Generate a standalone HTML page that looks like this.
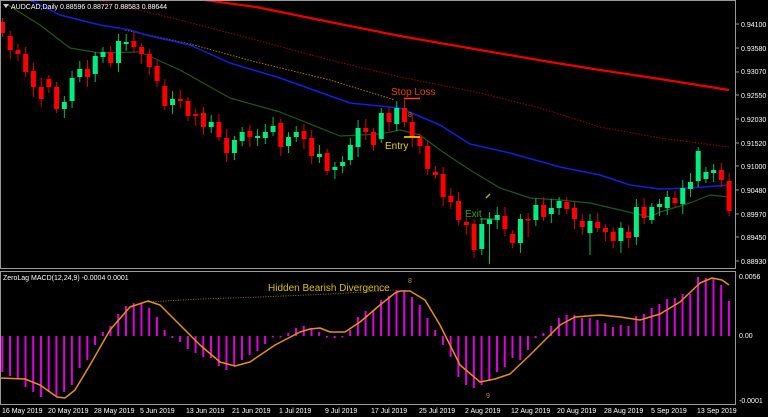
<!DOCTYPE html>
<html><head><meta charset="utf-8"><style>
html,body{margin:0;padding:0;background:#000;width:768px;height:417px;overflow:hidden}
svg{display:block}
text{font-family:"Liberation Sans",sans-serif}
</style></head><body>
<svg id="s" width="768" height="417" xmlns="http://www.w3.org/2000/svg">
<rect width="768" height="417" fill="#000"/>
<g id="g"></g>
<rect x="0.5" y="0.5" width="735" height="268" fill="none" stroke="#9a9a9a"/>
<rect x="0.5" y="271.5" width="735" height="133" fill="none" stroke="#9a9a9a"/>
<g font-size="7" fill="#fff">
<text x="741" y="27">0.94100</text><text x="741" y="51">0.93580</text><text x="741" y="74">0.93070</text>
<text x="741" y="98">0.92550</text><text x="741" y="122">0.92030</text><text x="741" y="146">0.91520</text>
<text x="741" y="169">0.91000</text><text x="741" y="193">0.90480</text><text x="741" y="217">0.89970</text>
<text x="741" y="240">0.89450</text><text x="741" y="264">0.88930</text>
<text x="739" y="279">0.0056</text><text x="739" y="338">0.00</text><text x="739" y="403">-0.0001</text>
</g>
<g stroke="#9a9a9a"><line x1="736" y1="24" x2="739" y2="24"/><line x1="736" y1="48" x2="739" y2="48"/><line x1="736" y1="72" x2="739" y2="72"/><line x1="736" y1="95" x2="739" y2="95"/><line x1="736" y1="119" x2="739" y2="119"/><line x1="736" y1="143" x2="739" y2="143"/><line x1="736" y1="166" x2="739" y2="166"/><line x1="736" y1="190" x2="739" y2="190"/><line x1="736" y1="214" x2="739" y2="214"/><line x1="736" y1="237" x2="739" y2="237"/><line x1="736" y1="261" x2="739" y2="261"/></g>
<g font-size="7" fill="#fff">
<text x="2" y="413">16 May 2019</text><text x="48" y="413">20 May 2019</text><text x="94" y="413">28 May 2019</text>
<text x="140" y="413">5 Jun 2019</text><text x="186" y="413">13 Jun 2019</text><text x="232" y="413">21 Jun 2019</text>
<text x="279" y="413">1 Jul 2019</text><text x="325" y="413">9 Jul 2019</text><text x="371" y="413">17 Jul 2019</text>
<text x="419" y="413">25 Jul 2019</text><text x="465" y="413">2 Aug 2019</text><text x="511" y="413">12 Aug 2019</text>
<text x="557" y="413">20 Aug 2019</text><text x="604" y="413">28 Aug 2019</text><text x="651" y="413">5 Sep 2019</text>
<text x="697" y="413">13 Sep 2019</text>
</g>
<polygon points="3,4 9,4 6,8" fill="#ccc"/>
<text x="11" y="9" font-size="7" fill="#fff">AUDCAD,Daily  0.88596 0.88727 0.88583 0.88644</text>
<text x="3" y="280" font-size="7" fill="#fff">ZeroLag MACD(12,24,9) -0.0004 0.0001</text>
<text x="268" y="291" font-size="10" fill="#d8c000">Hidden Bearish Divergence</text>
<text x="391" y="95" font-size="10" fill="#ee4010">Stop Loss</text>
<line x1="404" y1="98.5" x2="420" y2="98.5" stroke="#ff4010" stroke-width="1.5"/>
<text x="385" y="149" font-size="10" fill="#e8d800">Entry</text>
<line x1="404" y1="137" x2="420" y2="137" stroke="#ffee00" stroke-width="1.5"/>
<text x="465" y="217" font-size="10" fill="#30a030">Exit</text>
<polyline points="480,219 497,219" fill="none" stroke="#30a030" stroke-width="1"/>
<line x1="486" y1="198" x2="490" y2="194" stroke="#d0a000" stroke-width="1.5"/>
<text x="408" y="117" font-size="7" fill="#c08000">8</text>
<text x="408" y="283" font-size="7" fill="#c89000">8</text>
<text x="486" y="398" font-size="7" fill="#c89000">9</text>
</svg>
<script>
var NS="http://www.w3.org/2000/svg",g=document.getElementById("g");
function el(t,a){var e=document.createElementNS(NS,t);for(var k in a)e.setAttribute(k,a[k]);g.appendChild(e);return e;}
function pl(pts,c,w,d){el("polyline",{points:pts,fill:"none",stroke:c,"stroke-width":w,"stroke-dasharray":d||"none","stroke-linejoin":"round"});}
pl("205,0 256,7 330,22 400,36 480,50 550,62 600,70 660,79 729,90","#ee0000",2.2);
pl("97,0 180,20 256,40 330,60 400,77 480,93 540,108 600,127 660,138 729,147","#a00000",1,"1.5,1.5");
pl("125,30 190,44 256,62 330,80 395,100","#b08000",1,"1.5,1.5");
pl("30,0 60,15 100,25 130,30 150,36 190,45 230,63 280,78 350,103 400,108 440,125 470,144 510,153 560,167 600,175 630,185 660,189 690,188 729,185","#1020e0",1.5);
pl("8,5 40,25 70,48 100,53 140,52 180,70 230,98 280,112 340,136 380,134 400,130 420,135 440,150 470,170 500,188 530,198 560,200 590,203 620,210 650,217 660,212 690,203 710,195 729,197","#1a5a1a",1.2);
var C=[[22,33],[36,50],[50,54],[54,72],[71,87],[87,99],[79,87],[87,109],[109,102],[101,78],[77,69],[69,77],[74,56],[57,52],[52,63],[63,41],[44,42],[41,47],[47,54],[54,67],[66,81],[86,106],[105,99],[99,101],[101,116],[114,116],[113,127],[127,122],[122,137],[138,153],
[153,140],[141,132],[131,137],[138,136],[138,132],[132,126],[123,147],[146,137],[137,132],[131,139],[138,156],[157,154],[153,171],[170,167],[166,162],[160,145],[147,128],[128,132],[132,145],[139,113],[113,122],[124,108],[108,122],[122,137],[137,146],[146,169],[172,175],[174,197],[196,202],[201,220],[222,225],[224,250],[249,224],[224,219,212,264],[220,215],[216,229],[234,243],[243,219],[219,220,213,237],[220,205],[205,217],[214,208],[208,201],[202,209],[208,219],[221,227],[233,221,214,255],[222,228],[228,232],[232,241],[241,228,222,253],[232,238],[237,207],[207,218],[220,207],[207,204],[208,197],[198,203],[204,188],[189,182],[181,151],[179,172],[173,170],[170,180],[181,211]];
C.forEach(function(c,i){var x=2.5+i*7.73,up=c[1]<c[0],col=up?"#00ee80":"#ff0000";
var t=Math.min(c[0],c[1]),b=Math.max(c[0],c[1]);var h=c[2]||t-4-(i*7%6),l=c[3]||b+4+(i*5%7);
el("line",{x1:x,y1:h,x2:x,y2:l,stroke:up?"#00c060":"#e00000","stroke-width":1});
el("rect",{x:x-2.5,y:t,width:5,height:Math.max(1.5,b-t),fill:col});});
var H=[372,376,379,387,392,397,392,397,392,385,368,360,345,332,326,314,306,303,303,308,317,330,338,342,349,353,357,358,366,370,366,360,355,351,344,336,336,333,328,326,328,332,336,338,336,330,317,311,310,300,296,290,290,297,305,318,330,345,357,377,385,388,385,380,372,367,358,360,350,338,333,326,318,315,315,318,318,320,323,327,325,326,316,314,308,304,299,298,294,294,277,278,278,285,301];
H.forEach(function(y,i){var x=2.3+i*7.73;el("line",{x1:x,y1:336,x2:x,y2:Math.abs(y-336)<1?337.5:y,stroke:"#e000e0","stroke-width":2});});
pl("148,302 200,299 260,297 330,294 395,290","#9a7a00",1,"1,1.5");
pl("0,378 25,379 40,385 57,397 65,398 75,390 90,365 110,330 130,307 148,301 160,305 180,325 200,345 220,362 235,366 250,362 275,345 300,332 310,329 320,328 330,332 345,332 360,322 380,305 395,293 400,291 410,291 425,300 440,325 460,365 480,382 495,379 510,374 530,355 560,325 575,317 600,315 620,317 640,320 660,314 680,302 700,283 712,278 722,280 729,285","#e89010",1.5);
</script>
</body></html>
